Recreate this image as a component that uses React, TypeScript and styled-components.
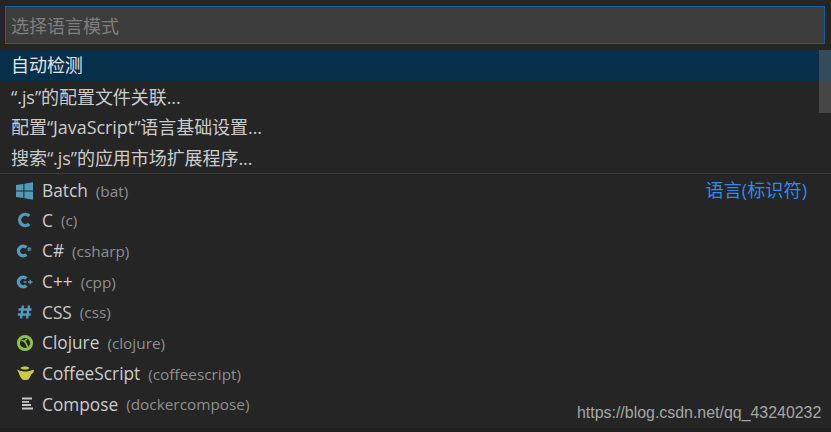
import React from "react";
import styled, { createGlobalStyle } from "styled-components";

const Global = createGlobalStyle`
  html, body { margin: 0; padding: 0; background: #252526; }
  #root { width: 831px; height: 432px; overflow: hidden; }
`;

const Panel = styled.div`
  position: relative;
  width: 831px;
  height: 432px;
  box-sizing: border-box;
  background: #252526;
  padding-top: 6px;
  overflow: hidden;
  font-family: "Open Sans", "Noto Sans CJK SC", sans-serif;
  font-size: 18px;
  color: #cccccc;
`;

const InputWrap = styled.div`
  padding: 0 6px 0 5px;
`;

const Input = styled.div`
  height: 38px;
  box-sizing: border-box;
  border: 1px solid #0e639c;
  background: #3c3c3c;
  color: #7f7f7f;
  display: flex;
  align-items: center;
  padding: 2px 0 0 5px;
  line-height: 1;
`;

const TopList = styled.div`
  margin-top: 6px;
  display: flex;
  flex-direction: column;
  border-bottom: 1px solid #3c3c3c;
`;

const TopRow = styled.div<{ $active?: boolean; $h?: number; $lift?: number }>`
  height: ${(p) => p.$h ?? 31}px;
  box-sizing: border-box;
  display: flex;
  align-items: center;
  padding: 0 0 ${(p) => p.$lift ?? 3}px 11px;
  white-space: nowrap;
  letter-spacing: -0.06px;
  background: ${(p) => (p.$active ? "#062f4a" : "transparent")};
  color: ${(p) => (p.$active ? "#e4e4e4" : "#cccccc")};
`;

const LangList = styled.div`
  display: flex;
  flex-direction: column;
  padding-top: 2px;
`;

const LangRow = styled.div<{ $h?: number }>`
  height: ${(p) => p.$h ?? 30.65}px;
  display: flex;
  align-items: center;
  white-space: nowrap;
`;

const IconSlot = styled.div`
  width: 42px;
  height: 100%;
  padding-left: 14px;
  box-sizing: border-box;
  display: flex;
  align-items: center;
  flex-shrink: 0;
`;

const Name = styled.span`
  color: #cccccc;
  font-size: 17.3px;
`;

const Id = styled.span`
  color: #8f8f8f;
  font-size: 15.35px;
  margin-left: 8px;
`;

const Detail = styled.span`
  margin-left: auto;
  margin-right: 24px;
  padding-bottom: 3px;
  color: #3388ee;
  font-size: 18.15px;
`;

const Scrollbar = styled.div`
  position: absolute;
  right: 0;
  top: 50px;
  width: 12px;
  height: 63px;
  background: rgba(121, 121, 121, 0.4);
`;

const Watermark = styled.div`
  position: absolute;
  left: 577px;
  top: 403px;
  font-family: "Liberation Sans", Arial, sans-serif;
  font-size: 15.93px;
  line-height: 20px;
  color: #a6a6a6;
  white-space: nowrap;
`;

const BottomEdge = styled.div`
  position: absolute;
  left: 0;
  right: 0;
  bottom: 0;
  height: 4px;
  background: #1f1f1f;
`;

const Svg = styled.svg`
  display: block;
  overflow: visible;
`;

const blue = "#519aba";

const Win = () => (
  <Svg width="20" height="18" viewBox="0 0 20 18">
    <path fill={blue} d="M2 3.1 9.4 1.9v6.6H2zM10.4 1.7 19 .3v8.2h-8.6zM2 9.5h7.4v6.6L2 14.9zM10.4 9.5H19v8.2l-8.6-1.4z" />
  </Svg>
);

const CPlain = () => (
  <Svg width="20" height="16" viewBox="0 0 20 16">
    <path d="M15.2 4A5.6 5.6 0 1 0 15.2 12" fill="none" stroke={blue} strokeWidth="3.4" />
  </Svg>
);

const CSharp = () => (
  <Svg width="20" height="16" viewBox="0 0 20 16">
    <path d="M12.4 4.6A4.7 4.7 0 1 0 12.4 11.4" fill="none" stroke={blue} strokeWidth="3.4" />
    <path d="M14.4 4.2v4M16 4.2v4M13.4 5.4h3.8M13.4 7h3.8" stroke={blue} strokeWidth="0.8" fill="none" />
  </Svg>
);

const CPlus = () => (
  <Svg width="20" height="16" viewBox="0 0 20 16">
    <path d="M12.4 4.6A4.7 4.7 0 1 0 12.4 11.4" fill="none" stroke={blue} strokeWidth="3.4" />
    <path d="M9.5 8h3M14 8h4.5M16.2 5.8v4.4" stroke={blue} strokeWidth="1.3" fill="none" />
  </Svg>
);

const Hash = () => (
  <Svg width="20" height="16" viewBox="0 0 20 16">
    <path d="M9 1.5 7 14.5M15 1.5l-2 13M4.5 5.5h13M3.8 10.5h13" stroke={blue} strokeWidth="2.4" fill="none" />
  </Svg>
);

const Clojure = () => (
  <Svg width="20" height="20" viewBox="0 0 20 20">
    <circle cx="11" cy="10" r="6.6" fill="none" stroke="#8dc149" strokeWidth="3" />
    <path d="M7.5 7.5c3 0 5 3 6 6.5M13 6c-2 1-2.5 2-2.5 3" fill="none" stroke="#8dc149" strokeWidth="1.6" />
  </Svg>
);

const Coffee = () => (
  <Svg width="20" height="18" viewBox="0 0 20 18">
    <path fill="#cbcb41" d="M6.5 3C8 1 14 1 15.5 3 14 5 8 5 6.5 3zM3 4.5l3 1.2c3 1 8 1 10.5 0l1.2-.8 1.4-.2c1.4 0 1.2 3-2 4.8-.8 2.4-2.4 5.5-4.1 5.5H9.8C7.2 14.5 5.2 10 4.8 8z" />
  </Svg>
);

const Lines = () => (
  <Svg width="20" height="16" viewBox="0 0 20 16">
    <path d="M8 2.5h10M8 5.8h7M8 9h9M8 12.5h11" stroke="#c8c8c8" strokeWidth="1.8" fill="none" />
  </Svg>
);

const langs: { icon: React.ReactNode; name: string; id: string; detail?: string; h?: number }[] = [
  { icon: <Win />, name: "Batch", id: "(bat)", detail: "语言(标识符)", h: 29 },
  { icon: <CPlain />, name: "C", id: "(c)" },
  { icon: <CSharp />, name: "C#", id: "(csharp)" },
  { icon: <CPlus />, name: "C++", id: "(cpp)" },
  { icon: <Hash />, name: "CSS", id: "(css)" },
  { icon: <Clojure />, name: "Clojure", id: "(clojure)" },
  { icon: <Coffee />, name: "CoffeeScript", id: "(coffeescript)" },
  { icon: <Lines />, name: "Compose", id: "(dockercompose)" },
];

export default function App() {
  return (
    <>
      <Global />
      <Panel>
        <InputWrap>
          <Input>选择语言模式</Input>
        </InputWrap>
        <TopList>
          <TopRow $active>自动检测</TopRow>
          <TopRow $lift={2}>“.js”的配置文件关联...</TopRow>
          <TopRow $lift={3}>配置“JavaScript”语言基础设置...</TopRow>
          <TopRow $h={30} $lift={3}>搜索“.js”的应用市场扩展程序...</TopRow>
        </TopList>
        <LangList>
          {langs.map((l) => (
            <LangRow key={l.name} $h={l.h}>
              <IconSlot>{l.icon}</IconSlot>
              <Name>{l.name}</Name>
              <Id>{l.id}</Id>
              {l.detail && <Detail>{l.detail}</Detail>}
            </LangRow>
          ))}
        </LangList>
        <Scrollbar />
        <BottomEdge />
        <Watermark>https://blog.csdn.net/qq_43240232</Watermark>
      </Panel>
    </>
  );
}
